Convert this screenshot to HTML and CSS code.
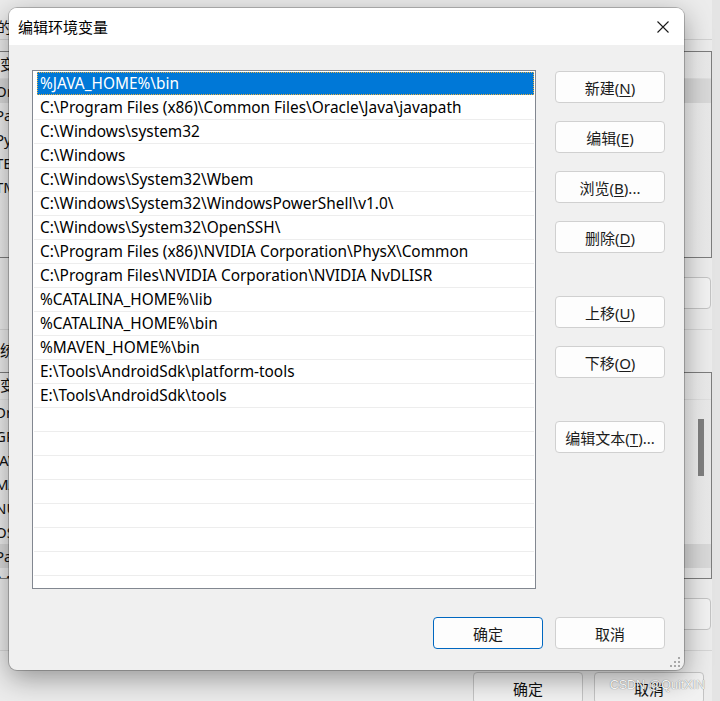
FILE: index.html
```html
<!DOCTYPE html>
<html lang="zh-CN">

<head>
    <meta charset="UTF-8">
    <meta name="viewport" content="width=device-width, initial-scale=1.0">
    <title>编辑环境变量</title>
    <link rel="stylesheet" href="styles.css">
</head>

<body>
    <div class="desktop">
        <!-- Environment variables window behind the dialog -->
        <div class="back-window">
            <div class="bw-top">
                <span class="bw-cut bw-cut-user">Administrator 的</span><span>用户变量(U)</span>
            </div>
            <div class="bw-list bw-list-user">
                <div class="bw-head">变量</div>
                <div class="bw-row bw-selected">OneDrive</div>
                <div class="bw-row">Path</div>
                <div class="bw-row">Pyy</div>
                <div class="bw-row">TEMP</div>
                <div class="bw-row">TMP</div>
            </div>
            <div class="bw-buttons">
                <button class="bw-btn">删除(D)</button>
            </div>
            <div class="bw-label bw-label-system">系统变量(S)</div>
            <div class="bw-list bw-list-system">
                <div class="bw-head">变量</div>
                <div class="bw-row">DriverData</div>
                <div class="bw-row">GRADLE_HOME</div>
                <div class="bw-row">JAVA_HOME</div>
                <div class="bw-row">MAVEN_HOME</div>
                <div class="bw-row">NUMBER_OF_PROCESSORS</div>
                <div class="bw-row">OS</div>
                <div class="bw-row bw-selected">Path</div>
                <div class="bw-row">^ATHEXT</div>
                <div class="bw-scroll"></div>
            </div>
            <div class="bw-buttons">
                <button class="bw-btn">删除(L)</button>
            </div>
            <div class="bw-footer">
                <button class="bw-btn">确定</button>
                <button class="bw-btn">取消</button>
            </div>
        </div>

        <!-- Edit environment variable dialog -->
        <section class="dialog">
            <div class="titlebar">
                <div class="title">编辑环境变量</div>
                <svg class="close" width="12" height="12" viewBox="0 0 12 12">
                    <path d="M0.5 0.5 L11.5 11.5 M11.5 0.5 L0.5 11.5" stroke="#1a1a1a" stroke-width="1.1" fill="none" />
                </svg>
            </div>

            <div class="dialog-body">
                <div class="path-list">
                    <div class="row selected"><span class="focus">%JAVA_HOME%\bin</span></div>
                    <div class="row">C:\Program Files (x86)\Common Files\Oracle\Java\javapath</div>
                    <div class="row">C:\Windows\system32</div>
                    <div class="row">C:\Windows</div>
                    <div class="row">C:\Windows\System32\Wbem</div>
                    <div class="row">C:\Windows\System32\WindowsPowerShell\v1.0\</div>
                    <div class="row">C:\Windows\System32\OpenSSH\</div>
                    <div class="row">C:\Program Files (x86)\NVIDIA Corporation\PhysX\Common</div>
                    <div class="row">C:\Program Files\NVIDIA Corporation\NVIDIA NvDLISR</div>
                    <div class="row">%CATALINA_HOME%\lib</div>
                    <div class="row">%CATALINA_HOME%\bin</div>
                    <div class="row">%MAVEN_HOME%\bin</div>
                    <div class="row">E:\Tools\AndroidSdk\platform-tools</div>
                    <div class="row">E:\Tools\AndroidSdk\tools</div>
                    <div class="row"></div>
                    <div class="row"></div>
                    <div class="row"></div>
                    <div class="row"></div>
                    <div class="row"></div>
                    <div class="row"></div>
                    <div class="row"></div>
                    <div class="row"></div>
                </div>

                <!-- Buttons on the right -->
                <div class="actions">
                    <button class="btn">新建(<u>N</u>)</button>
                    <button class="btn">编辑(<u>E</u>)</button>
                    <button class="btn">浏览(<u>B</u>)...</button>
                    <button class="btn">删除(<u>D</u>)</button>
                    <button class="btn btn-gap">上移(<u>U</u>)</button>
                    <button class="btn">下移(<u>O</u>)</button>
                    <button class="btn btn-gap">编辑文本(<u>T</u>)...</button>
                </div>
            </div>

            <div class="dialog-footer">
                <button class="btn btn-primary">确定</button>
                <button class="btn">取消</button>
            </div>

            <svg class="grip" width="12" height="12" viewBox="0 0 12 12">
                <rect x="9" y="1" width="2" height="2" fill="#a8a8a8" />
                <rect x="5" y="5" width="2" height="2" fill="#a8a8a8" />
                <rect x="9" y="5" width="2" height="2" fill="#a8a8a8" />
                <rect x="1" y="9" width="2" height="2" fill="#a8a8a8" />
                <rect x="5" y="9" width="2" height="2" fill="#a8a8a8" />
                <rect x="9" y="9" width="2" height="2" fill="#a8a8a8" />
            </svg>
        </section>

        <div class="watermark">CSDN @QuitXIN</div>
    </div>
</body>

</html>
```

FILE: styles.css
```css
/* whole page */
* {
    margin: 0;
    padding: 0;
    box-sizing: border-box;
}

body {
    width: 720px;
    height: 701px;
    overflow: hidden;
    font-family: "Noto Sans", "Noto Sans CJK SC", sans-serif;
    font-size: 15px;
    color: #000;
    background: #e4e4e4;
}

.desktop {
    position: relative;
    width: 720px;
    height: 701px;
    overflow: hidden;
}

/* Window behind the dialog */
.back-window {
    position: absolute;
    left: -8px;
    top: 0;
    width: 720px;
    height: 720px;
    background: #ececec;
    display: flex;
    flex-direction: column;
    color: #111;
}

.bw-top {
    height: 40px;
    display: flex;
    align-items: flex-end;
    padding-bottom: 2px;
    border-bottom: 1px solid #d2d2d2;
    white-space: nowrap;
}

.bw-cut {
    display: flex;
    justify-content: flex-end;
    white-space: nowrap;
}

.bw-cut-user {
    width: 20px;
}

.bw-list {
    position: relative;
    margin-top: 11px;
    height: 207px;
    border: 1px solid #7d7d7d;
    background: linear-gradient(to right, #ececec, #f6f6f6 95%, #e8e8e8);
    overflow: hidden;
}

.bw-head {
    height: 27px;
    line-height: 24px;
    padding-left: 7px;
    border-bottom: 1px solid #e0e0e0;
}

.bw-row {
    height: 24px;
    line-height: 24px;
    padding-left: 2px;
    white-space: nowrap;
}

.bw-selected {
    background: #d9d9d9;
}

.bw-scroll {
    position: absolute;
    right: 7px;
    top: 46px;
    width: 6px;
    height: 57px;
    background: #808080;
}

.bw-buttons {
    display: flex;
    justify-content: flex-end;
    padding-right: 1px;
    margin-top: 19px;
    padding-bottom: 20px;
    border-bottom: 1px solid #d6d6d6;
}

.bw-btn {
    width: 110px;
    height: 32px;
    border: 1px solid #c4c4c4;
    border-radius: 4px;
    background: #f2f2f2;
    font-family: inherit;
    font-size: 15px;
    color: #111;
}

.bw-label {
    height: 42px;
    line-height: 40px;
    white-space: nowrap;
}

.bw-label-system {
    margin-left: -7px;
}

.bw-list-system {
    margin-top: 0;
}

.bw-footer {
    display: flex;
    gap: 11px;
    padding-left: 481px;
    margin-top: 21px;
}

/* Dialog */
.dialog {
    position: absolute;
    left: 9px;
    top: 8px;
    width: 675px;
    height: 662px;
    background: #f0f0f0;
    border-radius: 8px;
    box-shadow: 0 0 0 1px rgba(0, 0, 0, 0.22), 0 8px 28px rgba(0, 0, 0, 0.38);
    overflow: hidden;
    display: flex;
    flex-direction: column;
}

.titlebar {
    height: 37px;
    background: #fff;
    display: flex;
    align-items: center;
    justify-content: space-between;
    padding: 0 15px 0 9px;
}

.title {
    font-size: 15px;
    margin-top: -1px;
}

.close {
    margin-top: 1px;
}

.dialog-body {
    display: flex;
    gap: 19px;
    padding: 25px 19px 0 23px;
}

/* List of paths */
.path-list {
    width: 504px;
    height: 519px;
    border: 1px solid #828790;
    background: #fff;
    padding: 1px;
    overflow: hidden;
    font-size: 15.4px;
}

.row {
    height: 24px;
    line-height: 23px;
    padding-left: 6px;
    border-bottom: 1px solid #ededed;
    white-space: nowrap;
}

.row.selected {
    margin-left: 3px;
    padding-left: 0;
    border-bottom-color: #fff;
    background: #0078d7;
    color: #fff;
}

.focus {
    display: block;
    height: 23px;
    padding-left: 3px;
    outline: 1px dotted #e8b040;
    outline-offset: -1px;
}

/* Buttons */
.actions {
    display: flex;
    flex-direction: column;
    gap: 18px;
    margin-top: 1px;
}

.btn {
    width: 110px;
    height: 32px;
    border: 1px solid #d0d0d0;
    border-radius: 4px;
    background: #fdfdfd;
    font-family: inherit;
    font-size: 15px;
    color: #1b1b1b;
}

.btn u {
    text-underline-offset: 2px;
}

.btn-gap {
    margin-top: 25px;
}

.btn-primary {
    border-color: #0067c0;
}

.dialog-footer {
    display: flex;
    justify-content: flex-end;
    gap: 12px;
    padding: 28px 19px 0;
}

.grip {
    position: absolute;
    right: 3px;
    bottom: 2px;
}

.watermark {
    position: absolute;
    right: 15px;
    bottom: 9px;
    font-family: "Liberation Sans", sans-serif;
    font-size: 12.5px;
    color: #f4f4f4;
    text-shadow: 0 0 1px rgba(0, 0, 0, 0.6);
}
```
